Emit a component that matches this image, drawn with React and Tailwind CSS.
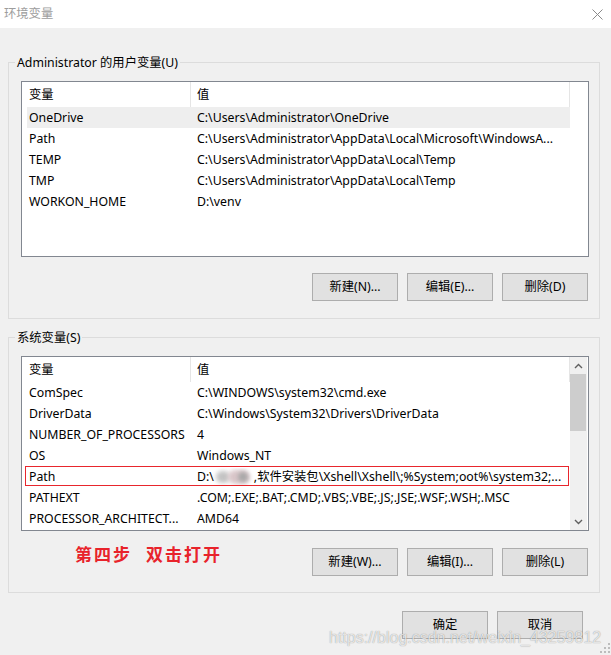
import React from "react";

const userRows = [
  ["OneDrive", "C:\\Users\\Administrator\\OneDrive"],
  ["Path", "C:\\Users\\Administrator\\AppData\\Local\\Microsoft\\WindowsA..."],
  ["TEMP", "C:\\Users\\Administrator\\AppData\\Local\\Temp"],
  ["TMP", "C:\\Users\\Administrator\\AppData\\Local\\Temp"],
  ["WORKON_HOME", "D:\\venv"],
];

const sysRows = [
  ["ComSpec", "C:\\WINDOWS\\system32\\cmd.exe"],
  ["DriverData", "C:\\Windows\\System32\\Drivers\\DriverData"],
  ["NUMBER_OF_PROCESSORS", "4"],
  ["OS", "Windows_NT"],
  ["Path", null],
  ["PATHEXT", ".COM;.EXE;.BAT;.CMD;.VBS;.VBE;.JS;.JSE;.WSF;.WSH;.MSC"],
  ["PROCESSOR_ARCHITECT...", "AMD64"],
];

function Chevron({ up }) {
  return (
    <svg width="9" height="6" viewBox="0 0 9 6">
      <path
        d={up ? "M1 5 L4.5 1.5 L8 5" : "M1 1 L4.5 4.5 L8 1"}
        fill="none"
        stroke="#606060"
        strokeWidth="1.4"
      />
    </svg>
  );
}

function PathValue() {
  return (
    <span className="flex items-center">
      D:\
      <span className="inline-block w-[40px] h-[16px] relative">
        <span className="absolute left-[2px] top-[2px] w-[14px] h-[12px] bg-[#c4c4c4] blur-[2px] rounded-full" />
        <span className="absolute left-[14px] top-[1px] w-[22px] h-[14px] bg-[#d9c6c9] blur-[2px] rounded-full" />
        <span className="absolute left-[24px] top-[3px] w-[10px] h-[10px] bg-[#a8a8a8] blur-[2px] rounded-full" />
      </span>
      ,软件安装包\Xshell\Xshell\;%System;oot%\system32;...
    </span>
  );
}

function VarList({ rows, height, selected, marked, scroll }) {
  return (
    <div className={`border border-[#828790] bg-white flex ${height}`}>
      <div className="w-[548px] flex flex-col">
        <div className="h-[25px] flex shrink-0">
          <div className="w-[169px] border-r border-[#e5e5e5] pl-[7px] pt-[2px] flex items-center">
            变量
          </div>
          <div className="w-[379px] border-r border-[#e5e5e5] pl-[6px] pt-[2px] flex items-center">
            值
          </div>
        </div>
        {rows.map(([name, value], i) => (
          <div key={name + i} className="h-[21px] relative flex shrink-0">
            <div
              className={`ml-[5px] w-[543px] flex items-center pt-[1px] ${
                i === selected ? "bg-[#eeeeee]" : ""
              }`}
            >
              <div className="w-[164px] pl-[2px] whitespace-nowrap overflow-hidden">
                {name}
              </div>
              <div className="flex-1 pl-[6px] whitespace-nowrap overflow-hidden">
                {value === null ? <PathValue /> : value}
              </div>
            </div>
            {i === marked && (
              <div className="absolute left-[3px] top-0 w-[544px] h-[20px] border border-[#e8262d]" />
            )}
          </div>
        ))}
      </div>
      {scroll ? (
        <div className="w-[17px] bg-[#f0f0f0] flex flex-col">
          <div className="h-[17px] flex items-center justify-center">
            <Chevron up />
          </div>
          <div className="h-[57px] mr-[1px] bg-[#cdcdcd]" />
          <div className="flex-1" />
          <div className="h-[17px] flex items-center justify-center">
            <Chevron />
          </div>
        </div>
      ) : null}
    </div>
  );
}

function Btn({ children }) {
  return (
    <div className="w-[86px] h-[28px] bg-[#e1e1e1] border border-[#adadad] flex items-center justify-center pt-[1px]">
      {children}
    </div>
  );
}

function GroupBox({ legend, height, children }) {
  return (
    <div className={`relative border border-[#dcdcdc] pt-[18px] pl-[12px] pr-[10px] ${height}`}>
      <span className="absolute left-[6px] top-[-10px] px-[2px] bg-[#f0f0f0] leading-[20px]">
        {legend}
      </span>
      {children}
    </div>
  );
}

export default function App() {
  return (
    <div className="w-[611px] h-[655px] bg-[#f0f0f0] relative overflow-hidden text-[12.3px] text-black font-['Noto_Sans','Noto_Sans_CJK_SC',sans-serif]">
      <div className="h-[28px] bg-white flex items-center justify-between pl-[4px] pr-[8px]">
        <span className="text-[#9d9d9d]">环境变量</span>
        <svg width="11" height="11" viewBox="0 0 11 11">
          <path d="M0.5 0.5 L10.5 10.5 M10.5 0.5 L0.5 10.5" stroke="#8a8a8a" strokeWidth="1" />
        </svg>
      </div>

      <div className="pl-[8px] pr-[11px] pt-[34px]">
        <GroupBox legend="Administrator 的用户变量(U)" height="h-[257px]">
          <VarList rows={userRows} height="h-[176px]" selected={0} />
          <div className="flex justify-end gap-[9px] mt-[16px] pr-[1px]">
            <Btn>新建(N)...</Btn>
            <Btn>编辑(E)...</Btn>
            <Btn>删除(D)</Btn>
          </div>
        </GroupBox>

        <div className="mt-[18px]">
          <GroupBox legend="系统变量(S)" height="h-[256px]">
            <VarList rows={sysRows} height="h-[175px]" marked={4} scroll />
            <div className="flex items-start mt-[17px] pr-[1px]">
              <div className="ml-[54px] mt-[-2px] text-[17px] leading-[18px] font-bold text-[#e8232b] tracking-[2px] flex gap-[14px]">
                <span>第四步</span>
                <span>双击打开</span>
              </div>
              <div className="flex-1" />
              <div className="flex gap-[9px]">
                <Btn>新建(W)...</Btn>
                <Btn>编辑(I)...</Btn>
                <Btn>删除(L)</Btn>
              </div>
            </div>
          </GroupBox>
        </div>

        <div className="flex justify-end gap-[9px] mt-[18px] pr-[17px]">
          <Btn>确定</Btn>
          <Btn>取消</Btn>
        </div>
      </div>

      <div className="absolute left-[329px] top-[627px] leading-[22px] text-[16px] font-['Liberation_Sans',sans-serif] text-white/75 [text-shadow:0_0_1px_rgba(0,0,0,0.45)] whitespace-nowrap">
        https://blog.csdn.net/weixin_43259812
      </div>

      <svg className="absolute right-[1px] bottom-[2px]" width="10" height="10" viewBox="0 0 10 10">
        <rect x="8" y="0" width="2" height="2" fill="#bcbcbc" />
        <rect x="4" y="4" width="2" height="2" fill="#bcbcbc" />
        <rect x="8" y="4" width="2" height="2" fill="#bcbcbc" />
        <rect x="0" y="8" width="2" height="2" fill="#bcbcbc" />
        <rect x="4" y="8" width="2" height="2" fill="#bcbcbc" />
        <rect x="8" y="8" width="2" height="2" fill="#bcbcbc" />
      </svg>
    </div>
  );
}
